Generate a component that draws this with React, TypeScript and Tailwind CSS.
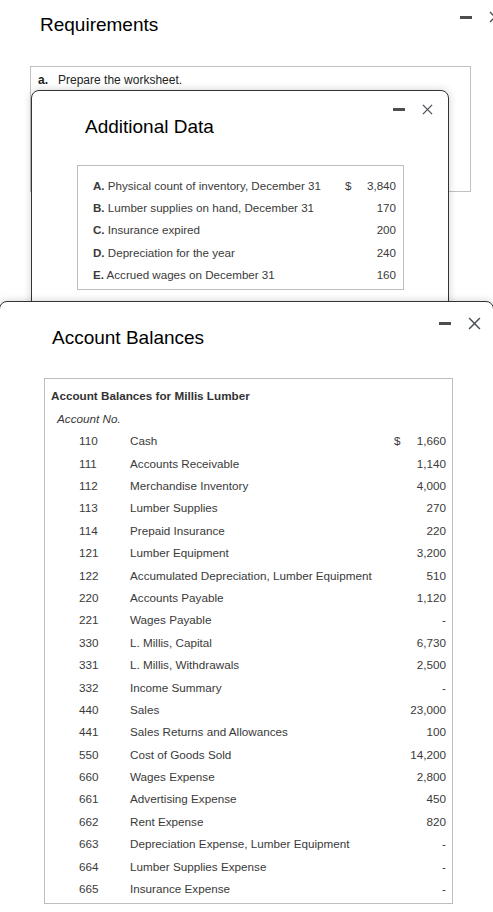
import React from 'react';

const font = "font-['Liberation_Sans',Arial,sans-serif]";

const additionalData = [
  { key: 'A.', label: 'Physical count of inventory, December 31', value: '3,840', dollar: true },
  { key: 'B.', label: 'Lumber supplies on hand, December 31', value: '170' },
  { key: 'C.', label: 'Insurance expired', value: '200' },
  { key: 'D.', label: 'Depreciation for the year', value: '240' },
  { key: 'E.', label: 'Accrued wages on December 31', value: '160' },
];

const accounts = [
  { no: '110', name: 'Cash', value: '1,660', dollar: true },
  { no: '111', name: 'Accounts Receivable', value: '1,140' },
  { no: '112', name: 'Merchandise Inventory', value: '4,000' },
  { no: '113', name: 'Lumber Supplies', value: '270' },
  { no: '114', name: 'Prepaid Insurance', value: '220' },
  { no: '121', name: 'Lumber Equipment', value: '3,200' },
  { no: '122', name: 'Accumulated Depreciation, Lumber Equipment', value: '510' },
  { no: '220', name: 'Accounts Payable', value: '1,120' },
  { no: '221', name: 'Wages Payable', value: '-' },
  { no: '330', name: 'L. Millis, Capital', value: '6,730' },
  { no: '331', name: 'L. Millis, Withdrawals', value: '2,500' },
  { no: '332', name: 'Income Summary', value: '-' },
  { no: '440', name: 'Sales', value: '23,000' },
  { no: '441', name: 'Sales Returns and Allowances', value: '100' },
  { no: '550', name: 'Cost of Goods Sold', value: '14,200' },
  { no: '660', name: 'Wages Expense', value: '2,800' },
  { no: '661', name: 'Advertising Expense', value: '450' },
  { no: '662', name: 'Rent Expense', value: '820' },
  { no: '663', name: 'Depreciation Expense, Lumber Equipment', value: '-' },
  { no: '664', name: 'Lumber Supplies Expense', value: '-' },
  { no: '665', name: 'Insurance Expense', value: '-' },
];

function WindowControls({ size = 12 }: { size?: number }) {
  return (
    <div className="flex items-center gap-[17px]">
      <span className="block h-[3px] w-[12px] bg-[#4d4d4d]" />
      <svg width={size} height={size} viewBox="0 0 12 12" fill="none">
        <path d="M1 1L11 11M11 1L1 11" stroke="#4a4f55" strokeWidth="1.4" />
      </svg>
    </div>
  );
}

export default function App() {
  return (
    <div className={`relative h-[912px] w-full overflow-hidden bg-white text-black ${font}`}>
      {/* background page */}
      <div className="flex items-start justify-between pl-[40px] pt-[14px]">
        <h1 className="text-[19px] leading-[22px] text-black">Requirements</h1>
        <div className="mr-[-8px] mt-[-3px] flex items-center gap-[17px]">
          <span className="block h-[3px] w-[12px] bg-[#4d4d4d]" />
          <svg width="12" height="12" viewBox="0 0 12 12" fill="none">
            <path d="M1 1L11 11M11 1L1 11" stroke="#4a4f55" strokeWidth="1.4" />
          </svg>
        </div>
      </div>
      <div className="ml-[30px] mt-[30px] h-[126px] w-[441px] border border-[#c2c2c2] px-[7px] pt-[5px]">
        <p className="text-[12px] leading-[16px] text-[#222]">
          <span className="font-bold">a.</span>
          <span className="ml-[10px]">Prepare the worksheet.</span>
        </p>
      </div>

      {/* Additional Data window */}
      <div className="absolute left-[31px] top-[90px] h-[240px] w-[418px] rounded-t-[8px] border border-[#333] bg-white shadow-[0_0_8px_rgba(0,0,0,0.18)]">
        <div className="flex items-start justify-between pl-[53px] pr-[15px] pt-[24px]">
          <h2 className="text-[19px] leading-[23px] text-black">Additional Data</h2>
          <div className="-mt-[11px]">
            <WindowControls size={11} />
          </div>
        </div>
        <div className="ml-[45px] mt-[27px] w-[327px] border border-[#bdbdbd] pb-[3px] pl-[15px] pr-[7px] pt-[8px] text-[11.6px] text-[#3a3a3a]">
          {additionalData.map((row) => (
            <div key={row.key} className="flex h-[22.4px] items-center">
              <span className="flex-1">
                <span className="font-bold">{row.key}</span> {row.label}
              </span>
              <span className="flex w-[51px] justify-between">
                <span>{row.dollar ? '$' : ''}</span>
                <span>{row.value}</span>
              </span>
            </div>
          ))}
        </div>
      </div>

      {/* Account Balances window */}
      <div className="absolute left-[-1px] top-[301px] h-[640px] w-[495px] rounded-t-[8px] border border-[#333] bg-white shadow-[0_0_8px_rgba(0,0,0,0.18)]">
        <div className="flex items-start justify-between pl-[52px] pr-[12px] pt-[24px]">
          <h2 className="text-[19px] leading-[23px] text-black">Account Balances</h2>
          <div className="-mt-[9px]">
            <WindowControls size={13} />
          </div>
        </div>
        <div className="ml-[44px] mt-[29px] w-[409px] border border-[#bdbdbd] pb-[3px] pr-[6px] pt-[6px] text-[11.7px] text-[#3a3a3a]">
          <div className="flex h-[22.4px] items-center pl-[6px] font-bold text-[#333]">
            Account Balances for Millis Lumber
          </div>
          <div className="flex h-[22.4px] items-center pl-[12px] italic">Account No.</div>
          {accounts.map((row) => (
            <div key={row.no} className="flex h-[22.4px] items-center pl-[34px]">
              <span className="w-[51px]">{row.no}</span>
              <span className="flex-1">{row.name}</span>
              <span className="flex w-[52px] justify-between">
                <span>{row.dollar ? '$' : ''}</span>
                <span>{row.value}</span>
              </span>
            </div>
          ))}
        </div>
      </div>
    </div>
  );
}
